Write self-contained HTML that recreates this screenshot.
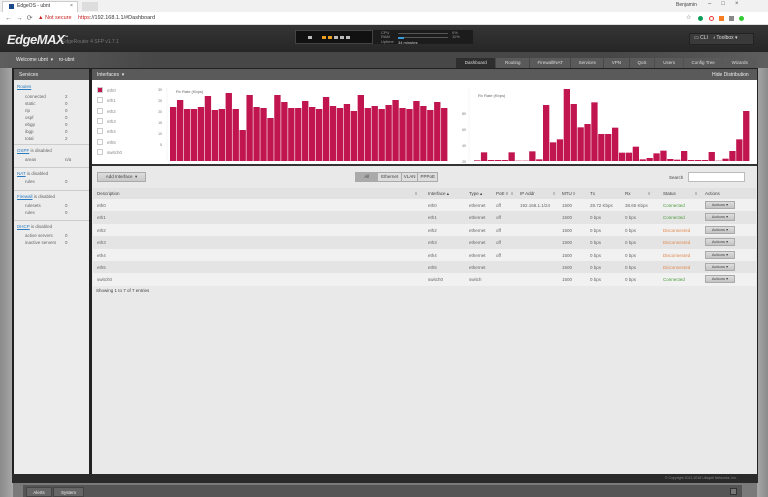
<!DOCTYPE html>
<html><head><style>
*{margin:0;padding:0;box-sizing:border-box}
body{width:768px;height:497px;overflow:hidden;font-family:"Liberation Sans",sans-serif;background:#7a7a7a;position:relative;font-size:5px;color:#555}
.a{position:absolute}
.t{position:absolute;white-space:nowrap}
</style></head><body>
<!-- chrome -->
<div class="a" style="left:0;top:0;width:768px;height:12px;background:#f1f1f1"></div>
<div class="a" style="left:2px;top:1px;width:76px;height:11px;background:#fff;border:1px solid #ccc;border-bottom:none"></div>
<div class="a" style="left:9px;top:4px;width:5px;height:5px;background:#1b4a8a"></div>
<div class="t" style="left:17px;top:3px;font-size:5px;color:#333">EdgeOS - ubnt</div>
<div class="t" style="left:70px;top:3px;font-size:5px;color:#555">×</div>
<div class="a" style="left:82px;top:2px;width:16px;height:9px;background:#ddd"></div>
<div class="t" style="left:676px;top:2px;font-size:5px;color:#444">Benjamin</div>
<div class="t" style="left:708px;top:1px;font-size:6px;color:#555">–&nbsp;&nbsp;&nbsp;&nbsp;&nbsp;&nbsp;□&nbsp;&nbsp;&nbsp;&nbsp;&nbsp;&nbsp;×</div>
<div class="a" style="left:0;top:12px;width:768px;height:13px;background:#fff;border-bottom:1px solid #ddd"></div>
<div class="t" style="left:5px;top:14px;font-size:7px;color:#666">←&nbsp; →&nbsp; ⟳</div>
<div class="t" style="left:38px;top:15px;font-size:5.5px;color:#c5221f">▲ Not secure</div>
<div class="t" style="left:78px;top:15px;font-size:5.5px;color:#333"><span style="color:#c5221f">https</span>://192.168.1.1/#Dashboard</div>
<div class="a" style="left:686px;top:15px;width:6px;height:6px;border-radius:50%;color:#666;font-size:6px;line-height:6px">☆</div>
<div class="a" style="left:698px;top:16px;width:5px;height:5px;border-radius:50%;background:#0a9d58"></div>
<div class="a" style="left:709px;top:16px;width:5px;height:5px;border-radius:50%;border:1.5px solid #e33"></div>
<div class="a" style="left:719px;top:16px;width:5px;height:5px;background:#f57c20"></div>
<div class="a" style="left:729px;top:16px;width:5px;height:5px;background:#888"></div>
<div class="a" style="left:739px;top:16px;width:5px;height:5px;border-radius:50%;background:#3c3"></div>
<!-- header -->
<div class="a" style="left:0;top:25px;width:768px;height:27px;background:linear-gradient(#353535,#262626)"></div>
<div class="t" style="left:7px;top:32px;font-size:13px;font-style:italic;font-weight:bold;color:#eee;letter-spacing:-0.5px">EdgeMAX<sup style="font-size:4px">™</sup></div>
<div class="t" style="left:62px;top:39px;font-size:5px;color:#777">EdgeRouter 4 SFP v1.7.1</div>
<div class="a" style="left:295px;top:30px;width:78px;height:14px;background:#111;border:1px solid #444"></div>
<div class="a" style="left:308px;top:36px;width:4px;height:3px;background:#bbb"></div>
<div class="a" style="left:322px;top:36px;width:4px;height:3px;background:#e8a020"></div>
<div class="a" style="left:328px;top:36px;width:4px;height:3px;background:#e8a020"></div>
<div class="a" style="left:334px;top:36px;width:4px;height:3px;background:#bbb"></div>
<div class="a" style="left:340px;top:36px;width:4px;height:3px;background:#bbb"></div>
<div class="a" style="left:346px;top:36px;width:4px;height:3px;background:#bbb"></div>
<div class="a" style="left:373px;top:30px;width:100px;height:14px;background:#1c1c1c"></div>
<div class="t" style="left:381px;top:31px;font-size:4px;color:#999;line-height:4.3px">CPU<br>RAM<br>Uptime</div>
<div class="a" style="left:398px;top:33px;width:50px;height:1px;background:#555"></div>
<div class="a" style="left:398px;top:37px;width:50px;height:1px;background:#555"></div>
<div class="a" style="left:398px;top:37px;width:6px;height:1.5px;background:#3a9ad9"></div>
<div class="t" style="left:398px;top:39.5px;font-size:4px;color:#ccc">34 minutes</div>
<div class="t" style="left:452px;top:31px;font-size:4px;color:#999;line-height:4.3px">0%<br>11%</div>
<div class="a" style="left:689px;top:33px;width:65px;height:12px;background:#3a3a3a;border:1px solid #222"></div>
<div class="t" style="left:694px;top:35px;font-size:5px;color:#ddd">▭ CLI &nbsp;&nbsp;&nbsp;⸗ Toolbox ▾</div>
<!-- nav -->
<div class="a" style="left:0;top:52px;width:768px;height:16px;background:linear-gradient(90deg,#5e5e5e,#474747 20%,#474747 80%,#5e5e5e)"></div>
<div class="t" style="left:16px;top:57px;font-size:5px;color:#eee">Welcome ubnt &nbsp;▾ &nbsp;&nbsp;&nbsp;ro-ubnt</div>
<div class="a" style="left:456px;top:58px;width:300px;height:10px;display:flex;gap:1px">
<div style="width:40px;background:#2e2e2e;color:#ddd;font-size:4.5px;text-align:center;line-height:10px">Dashboard</div>
<div style="width:33px;background:#5a5a5a;color:#ddd;font-size:4.5px;text-align:center;line-height:10px">Routing</div>
<div style="width:41px;background:#5a5a5a;color:#ddd;font-size:4.5px;text-align:center;line-height:10px">Firewall/NAT</div>
<div style="width:32px;background:#5a5a5a;color:#ddd;font-size:4.5px;text-align:center;line-height:10px">Services</div>
<div style="width:25px;background:#5a5a5a;color:#ddd;font-size:4.5px;text-align:center;line-height:10px">VPN</div>
<div style="width:25px;background:#5a5a5a;color:#ddd;font-size:4.5px;text-align:center;line-height:10px">QoS</div>
<div style="width:28px;background:#5a5a5a;color:#ddd;font-size:4.5px;text-align:center;line-height:10px">Users</div>
<div style="width:39px;background:#5a5a5a;color:#ddd;font-size:4.5px;text-align:center;line-height:10px">Config Tree</div>
<div style="width:33px;background:#5a5a5a;color:#ddd;font-size:4.5px;text-align:center;line-height:10px">Wizards</div>
</div>
<!-- side gradient -->
<div class="a" style="left:0;top:68px;width:13px;height:429px;background:linear-gradient(90deg,#8a8a8a,#a8a8a8)"></div>
<div class="a" style="left:757px;top:68px;width:11px;height:429px;background:linear-gradient(90deg,#a8a8a8,#8a8a8a)"></div>
<!-- frame -->
<div class="a" style="left:12px;top:68px;width:746px;height:415px;background:#222"></div>
<!-- left panel -->
<div class="a" style="left:14px;top:69px;width:75px;height:11px;background:#5a5a5a"></div>
<div class="t" style="left:19px;top:72px;font-size:5px;color:#eee">Services</div>
<div class="a" style="left:14px;top:80px;width:75px;height:394px;background:#ececec"></div>
<div class="a" style="left:14px;top:80px;width:75px;height:146px;font-size:4.5px;color:#666">
<div class="t" style="left:3px;top:4px;color:#2a7bc0;text-decoration:underline">Routes</div>
<div class="t" style="left:11px;top:13px;line-height:7px">connected<br>static<br>rip<br>ospf<br>ebgp<br>ibgp<br>total</div>
<div class="t" style="left:51px;top:13px;line-height:7px">2<br>0<br>0<br>0<br>0<br>0<br>2</div>
<div class="a" style="left:0;top:64px;width:75px;height:1px;background:#ccc"></div>
<div class="t" style="left:3px;top:68px"><span style="color:#2a7bc0;text-decoration:underline">OSPF</span> is disabled</div>
<div class="t" style="left:11px;top:77px">areas</div><div class="t" style="left:51px;top:77px">n/a</div>
<div class="a" style="left:0;top:87px;width:75px;height:1px;background:#ccc"></div>
<div class="t" style="left:3px;top:91px"><span style="color:#2a7bc0;text-decoration:underline">NAT</span> is disabled</div>
<div class="t" style="left:11px;top:99px">rules</div><div class="t" style="left:51px;top:99px">0</div>
<div class="a" style="left:0;top:110px;width:75px;height:1px;background:#ccc"></div>
<div class="t" style="left:3px;top:114px"><span style="color:#2a7bc0;text-decoration:underline">Firewall</span> is disabled</div>
<div class="t" style="left:11px;top:122px;line-height:7px">rulesets<br>rules</div><div class="t" style="left:51px;top:122px;line-height:7px">0<br>0</div>
<div class="a" style="left:0;top:140px;width:75px;height:1px;background:#ccc"></div>
<div class="t" style="left:3px;top:144px"><span style="color:#2a7bc0;text-decoration:underline">DHCP</span> is disabled</div>
<div class="t" style="left:11px;top:152px;line-height:7px">active servers<br>inactive servers</div><div class="t" style="left:51px;top:152px;line-height:7px">0<br>0</div>
</div>
<!-- main panel -->
<div class="a" style="left:92px;top:69px;width:665px;height:11px;background:#5a5a5a"></div>
<div class="t" style="left:97px;top:72px;font-size:5px;color:#eee">Interfaces &nbsp;▾</div>
<div class="t" style="left:712px;top:72px;font-size:5px;color:#eee">Hide Distribution</div>
<div class="a" style="left:92px;top:80px;width:665px;height:84px;background:#fff"></div>
<div class="a" style="left:92px;top:164px;width:665px;height:2px;background:#333"></div>
<div class="a" style="left:92px;top:166px;width:665px;height:308px;background:#e9e9e9"></div>
<!-- legend -->
<div class="a" style="left:97px;top:87px;width:6px;height:6px;background:#c0154f"></div>
<div id="leg"></div>
<svg class="a" style="left:92px;top:80px" width="665" height="84" id="ch">
<text x="84" y="13" font-size="4" fill="#666">Rx Rate (Kbps)</text>
<text x="386" y="17" font-size="4" fill="#666">Rx Rate (Kbps)</text>
<line x1="75" y1="8" x2="75" y2="81" stroke="#eee" stroke-width="0.5"/>
<line x1="377" y1="8" x2="377" y2="81" stroke="#eee" stroke-width="0.5"/>
</svg>
<!-- controls -->
<div class="a" style="left:97px;top:172px;width:49px;height:10px;background:linear-gradient(#ddd,#c8c8c8);border:1px solid #aaa;font-size:4.5px;color:#444;text-align:center;line-height:8px">Add Interface &nbsp;▾</div>
<div class="a" style="left:355px;top:172px;width:83px;height:10px;display:flex;border:1px solid #aaa;font-size:4.5px;color:#444;line-height:8px;text-align:center">
<div style="width:22px;background:#aaa">All</div><div style="width:24px;background:#ddd;border-left:1px solid #aaa">Ethernet</div><div style="width:17px;background:#ddd;border-left:1px solid #aaa">VLAN</div><div style="width:20px;background:#ddd;border-left:1px solid #aaa">PPPoE</div></div>
<div class="t" style="left:669px;top:175px;font-size:4.5px;color:#444">Search</div>
<div class="a" style="left:688px;top:172px;width:57px;height:10px;background:#fff;border:1px solid #bbb"></div>
<div id="tbl"></div>
<div class="t" style="left:96px;top:288px;font-size:4.5px;color:#444">Showing 1 to 7 of 7 entries</div>
<!-- footer -->
<div class="a" style="left:12px;top:474px;width:746px;height:9px;background:#2a2a2a"></div>
<div class="t" style="left:665px;top:476px;font-size:3.5px;color:#888">© Copyright 2012-2018 Ubiquiti Networks, Inc.</div>
<div class="a" style="left:23px;top:485px;width:719px;height:12px;background:#555"></div>
<div class="a" style="left:26px;top:487px;width:26px;height:10px;background:#666;border:1px solid #444;font-size:4.5px;color:#eee;text-align:center;line-height:9px">Alerts</div>
<div class="a" style="left:53px;top:487px;width:31px;height:10px;background:#666;border:1px solid #444;font-size:4.5px;color:#eee;text-align:center;line-height:9px">System</div>
<div class="a" style="left:730px;top:488px;width:7px;height:7px;background:#777;border:1px solid #333"></div>
<script>
var leg=["eth0","eth1","eth2","eth3","eth4","eth5","switch0"],h="";
leg.forEach(function(n,i){var y=87+i*10.3;h+='<div class="a" style="left:97px;top:'+y+'px;width:6px;height:6px;background:'+(i?'#fff':'#c0154f')+';border:1px solid #ccc"></div><div class="t" style="left:107px;top:'+(y+1)+'px;font-size:4.5px;color:#888">'+n+'</div>';});
document.getElementById('leg').innerHTML=h;
var s='',c1=[54,61,52,52,54,65,51,52,68,52,31,66,54,53,43,66,59,53,53,60,54,52,64,55,53,57,50,66,53,55,52,56,61,53,52,60,55,51,59,53];
var bw=(448-170)/40;
c1.forEach(function(v,i){s+='<rect x="'+(78+i*bw)+'" y="'+(81-v)+'" width="'+(bw-0.6)+'" height="'+v+'" fill="#c0154f"/>';});
var t2=[241,217,240,240,240,217,242,242,214,238,75,187,178,27,72,142,132,67,162,162,143,218,218,200,238,234,220,212,237,239,213,240,240,240,216,242,236,213,178,93];
var bw2=(750-474)/40;
t2.forEach(function(t,i){var v=(243-t)/3;s+='<rect x="'+(382+i*bw2)+'" y="'+(81-v)+'" width="'+(bw2-0.6)+'" height="'+v+'" fill="#c0154f"/>';});
[[30,11],[25,22],[20,33],[15,44],[10,55],[5,66]].forEach(function(a){s+='<text x="70" y="'+a[1]+'" font-size="3.5" fill="#777" text-anchor="end">'+a[0]+'</text>';});
[[80,36],[60,52],[40,68],[20,84]].forEach(function(a){s+='<text x="374" y="'+(a[1]-1)+'" font-size="3.5" fill="#777" text-anchor="end">'+a[0]+'</text>';});
document.getElementById('ch').innerHTML+=s;
var cols=[97,428,469,496,520,562,590,625,663,705];
var hd=["Description","Interface ▴","Type ▴","PoE ◊","IP Addr","MTU ◊","Tx","Rx","Status","Actions"];
var rows=[["eth0","eth0","ethernet","off","192.168.1.1/24","1500","28.72 Kbps","38.65 Kbps","Connected"],
["eth1","eth1","ethernet","off","","1500","0 bps","0 bps","Connected"],
["eth2","eth2","ethernet","off","","1500","0 bps","0 bps","Disconnected"],
["eth3","eth3","ethernet","off","","1500","0 bps","0 bps","Disconnected"],
["eth4","eth4","ethernet","off","","1500","0 bps","0 bps","Disconnected"],
["eth5","eth5","ethernet","","","1500","0 bps","0 bps","Disconnected"],
["switch0","switch0","switch","","","1500","0 bps","0 bps","Connected"]];
var o='<div class="a" style="left:93px;top:188px;width:663px;height:11px;background:#e2e2e2"></div>';
hd.forEach(function(x,i){o+='<div class="t" style="left:'+cols[i]+'px;top:191px;font-size:4.5px;color:#444">'+x+'</div>';});
[341,+511,553,648,695].forEach(function(x){o+='<div class="t" style="left:'+(x==341?415:x)+'px;top:191px;font-size:4.5px;color:#666">◊</div>';});
rows.forEach(function(r,j){var y=199+j*12.4;o+='<div class="a" style="left:93px;top:'+y+'px;width:663px;height:12.4px;background:'+(j%2?'#e4e4e4':'#f1f1f1')+'"></div>';
r.forEach(function(x,i){var col=i==8?(x=="Connected"?"#4a9a3a":"#e0874a"):"#666";o+='<div class="t" style="left:'+cols[i]+'px;top:'+(y+4)+'px;font-size:4.5px;color:'+col+'">'+x+'</div>';});
o+='<div class="a" style="left:705px;top:'+(y+2)+'px;width:30px;height:8px;background:linear-gradient(#ddd,#c4c4c4);border:1px solid #aaa;font-size:4px;color:#444;text-align:center;line-height:6px">Actions ▾</div>';});
document.getElementById('tbl').innerHTML=o;
</script>
</body></html>
